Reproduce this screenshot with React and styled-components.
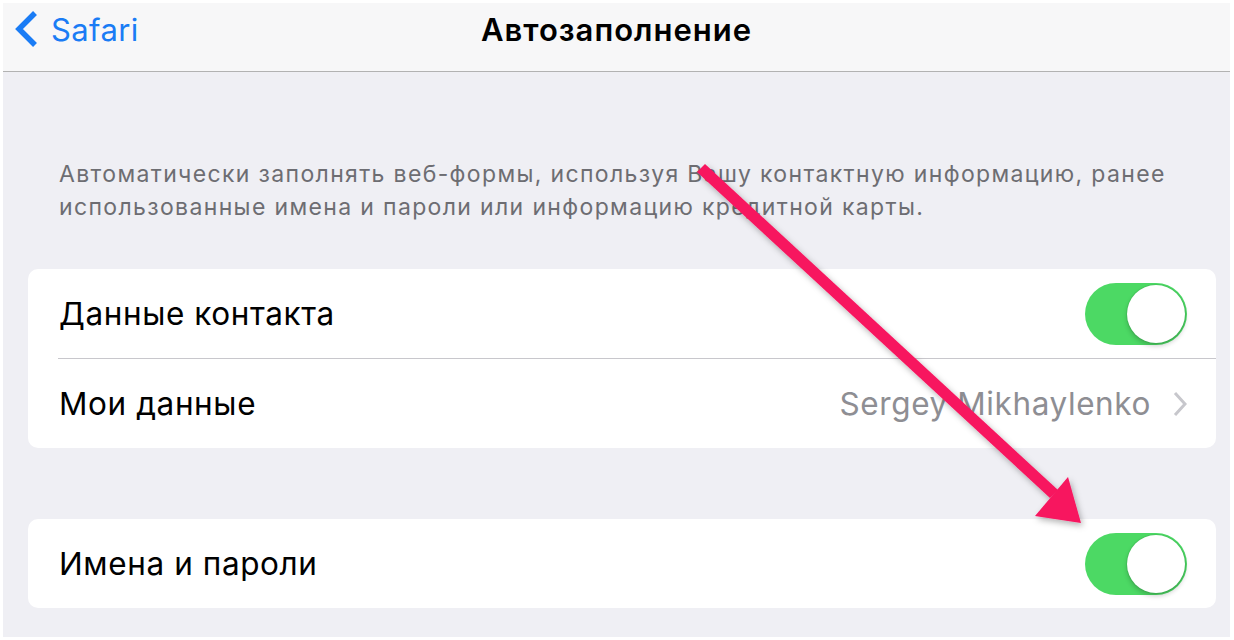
import React from 'react'
import styled, { createGlobalStyle } from 'styled-components'

const GlobalStyle = createGlobalStyle`
    body {
        margin: 0;
        background: #ffffff;
        font-family: Inter, "Noto Sans", sans-serif;
        -webkit-font-smoothing: antialiased;
    }
`

const Screen = styled.div`
    position: relative;
    margin: 3px 4px 3px 3px;
    height: 634px;
    background-color: #efeff4;
    overflow: hidden;
`

const NavBar = styled.header`
    height: 69px;
    box-sizing: border-box;
    padding-bottom: 16px;
    display: grid;
    grid-template-columns: 1fr auto 1fr;
    align-items: center;
    background-color: #f7f7f8;
    border-bottom: 1px solid #b2b2b2;
`

const BackButton = styled.div`
    display: flex;
    align-items: center;
    gap: 12px;
    padding-left: 10px;
    color: #1a7cf5;
    font-size: 31px;
    letter-spacing: 0.4px;
`

const Title = styled.h1`
    margin: 0;
    font-size: 31px;
    font-weight: 600;
    color: #000;
    letter-spacing: 1px;
`

const Content = styled.main`
    padding: 0 14px 0 25px;
`

const Description = styled.p`
    margin: 0;
    padding: 86px 0 45px 31px;
    font-size: 23px;
    line-height: 33px;
    color: #6d6d72;
    letter-spacing: 1.35px;
    white-space: nowrap;
`

const Card = styled.section`
    background: #fff;
    border-radius: 10px;
    margin-bottom: ${(p) => p.gap || 0}px;
`

const Row = styled.div`
    position: relative;
    height: 89px;
    display: flex;
    align-items: center;
    justify-content: space-between;
    padding: 0 29px 0 31px;
    font-size: 31.5px;
    letter-spacing: 0.6px;
    color: #000;
    & + & {
        border-top: 1px solid #c8c7cc;
        margin-left: 30px;
        padding-left: 1px;
    }
`

const Value = styled.div`
    display: flex;
    align-items: center;
    gap: 22px;
    color: #8e8e93;
`

const Toggle = styled.div`
    position: relative;
    width: 102px;
    height: 62px;
    border-radius: 31px;
    background: #4cd964;
    &::after {
        content: '';
        position: absolute;
        right: 2px;
        top: 2px;
        width: 58px;
        height: 58px;
        border-radius: 50%;
        background: #fff;
        box-shadow: 0 3px 5px rgba(0, 0, 0, 0.2), 0 0 0 1px rgba(0, 0, 0, 0.06);
    }
`

const Overlay = styled.svg`
    position: absolute;
    inset: 0;
    pointer-events: none;
`

function Chevron({ color }) {
    return (
        <svg width="26" height="38" viewBox="0 0 26 38">
            <path d="M22 3 L6 19 L22 35" fill="none" stroke={color} strokeWidth="5.5" strokeLinecap="butt" strokeLinejoin="miter" />
        </svg>
    )
}

export default function App() {
    return (
        <>
            <GlobalStyle />
            <Screen>
                <NavBar>
                    <BackButton>
                        <Chevron color="#1a7cf5" />
                        Safari
                    </BackButton>
                    <Title>Автозаполнение</Title>
                    <div />
                </NavBar>
                <Content>
                    <Description>
                        Автоматически заполнять веб-формы, используя Вашу контактную информацию, ранее
                        <br />
                        использованные имена и пароли или информацию кредитной карты.
                    </Description>
                    <Card gap={71}>
                        <Row>
                            Данные контакта
                            <Toggle />
                        </Row>
                        <Row>
                            Мои данные
                            <Value>
                                Sergey Mikhaylenko
                                <svg width="14" height="26" viewBox="0 0 14 26">
                                    <path d="M2 2 L12 13 L2 24" fill="none" stroke="#c7c7cc" strokeWidth="3" />
                                </svg>
                            </Value>
                        </Row>
                    </Card>
                    <Card>
                        <Row>
                            Имена и пароли
                            <Toggle />
                        </Row>
                    </Card>
                </Content>
                <Overlay width="1227" height="634" viewBox="3 3 1227 634">
                    <defs>
                        <filter id="sh" x="-10%" y="-10%" width="130%" height="130%">
                            <feDropShadow dx="2" dy="3" stdDeviation="3" floodColor="#000" floodOpacity="0.3" />
                        </filter>
                    </defs>
                    <g filter="url(#sh)" fill="#f7145f">
                        <polygon points="697,172 705,164 1058,490 1050,498" />
                        <polygon points="1081,523 1035,516 1068,477" />
                    </g>
                </Overlay>
            </Screen>
        </>
    )
}
